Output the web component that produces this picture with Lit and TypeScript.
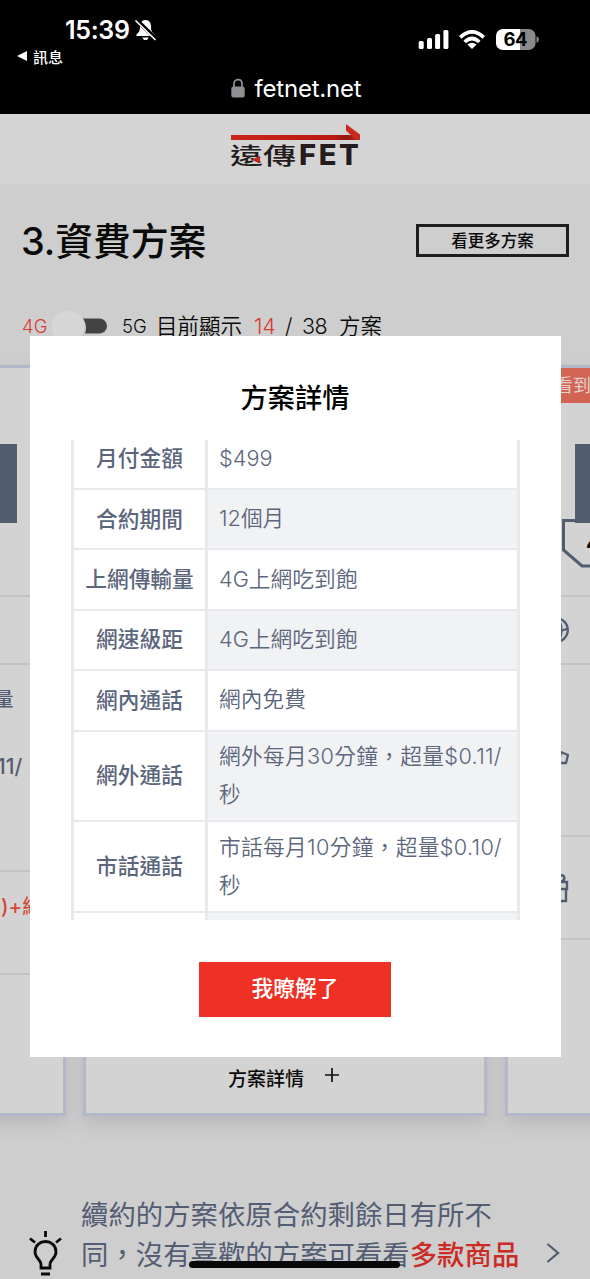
import { LitElement, html, css } from "lit";
import { customElement, property } from "lit/decorators.js";

const textFont = css`Inter, "Noto Sans CJK TC", sans-serif`;

@customElement("status-bar")
class StatusBar extends LitElement {
  static styles = css`
    :host { display: block; height: 114px; background: #000; color: #fff; font-family: ${textFont}; box-sizing: border-box; padding-top: 15px; }
    .top { display: flex; justify-content: space-between; height: 54px; }
    .clock { display: flex; align-items: center; height: 30px; padding-left: 65px; font-size: 25px; font-weight: 600; letter-spacing: -0.3px; gap: 5px; }
    .back { display: flex; align-items: center; height: 22px; padding-left: 17px; gap: 6px; font-size: 15px; font-weight: 500; }
    .signals { display: flex; padding: 13px 51px 0 0; gap: 10px; height: 24px; }
    .address { display: flex; justify-content: center; align-items: center; gap: 10px; height: 38px; padding-left: 2px; font-size: 24px; letter-spacing: -0.22px; }
    svg { display: block; flex: none; }
  `;
  render() {
    return html`
      <div class="top">
        <div>
          <div class="clock"><span>15:39</span>
            <svg width="21" height="22" viewBox="0 0 21 22">
              <path d="M10.500 1C6.500 1 5 4 5 8c0 4-1.300 5.500-3.500 7.300V17h18v-1.700C17.300 13.500 16 12 16 8c0-4-1.500-7-5.500-7z" fill="#fff"/>
              <path d="M7.500 18.500h6c-.6 2-1.600 2.600-3 2.600s-2.400-.6-3-2.600z" fill="#fff"/>
              <path d="M2 1.500L21 19.800" stroke="#000" stroke-width="4"/>
              <path d="M1 2L20 20.500" stroke="#fff" stroke-width="1.700" stroke-linecap="round"/>
            </svg>
          </div>
          <div class="back"><svg width="10" height="10" viewBox="0 0 10 10"><path d="M10 0v10L0 5z" fill="#fff"/></svg><span>訊息</span></div>
        </div>
        <div class="signals">
          <svg width="31" height="24" viewBox="-.7 0 31 24">
            <g fill="#fff"><rect x="0" y="13" width="5" height="8" rx="1.500"/><rect x="8.300" y="10" width="5" height="11" rx="1.500"/><rect x="16.400" y="6" width="5" height="15" rx="1.500"/><rect x="24.700" y="2" width="5" height="19" rx="1.500"/></g>
          </svg>
          <svg width="26" height="24" viewBox="0 0 26 24">
            <g fill="none" stroke="#fff" stroke-width="3.700"><path d="M1.300 9.300Q13-1.500 24.700 9.300"/><path d="M5.700 14Q13 7 20.300 14"/></g>
            <path d="M13 21l-4.600-4.500q4.600-3.700 9.200 0z" fill="#fff"/>
          </svg>
          <svg width="44" height="24" viewBox="0 0 44 24">
            <defs><clipPath id="b"><rect x="1" y="1" width="39.500" height="21" rx="6.800"/></clipPath></defs>
            <g clip-path="url(#b)"><rect width="25.500" height="24" fill="#fff"/><rect x="25.500" width="18" height="24" fill="#8b8b8b"/></g>
            <path d="M41.500 8.300q3 .8 2.300 3.500q0 2.200-2.300 3.200z" fill="#8b8b8b"/>
            <text x="20.300" y="18.300" text-anchor="middle" font-family="Inter" font-size="18.500" font-weight="700" letter-spacing="-.4" fill="#000">64</text>
          </svg>
        </div>
      </div>
      <div class="address">
        <svg width="14" height="20" viewBox="0 0 14 20"><rect x=".3" y="8.500" width="13.400" height="11" rx="2" fill="#8e8e93"/><path d="M3 9V5.600C3 .2 11 .2 11 5.600V9" fill="none" stroke="#8e8e93" stroke-width="1.800"/></svg>
        <span>fetnet.net</span>
      </div>`;
  }
}

@customElement("site-header")
class SiteHeader extends LitElement {
  static styles = css`
    :host { display: flex; justify-content: center; height: 70px; background: #d4d4d4; box-sizing: border-box; padding-top: 10px; }
    svg { display: block; overflow: visible; }
  `;
  render() {
    return html`<svg width="130" height="46" viewBox="0 0 130 46">
      <defs><linearGradient id="g" x1="0" x2="1"><stop offset="0" stop-color="#c9271c"/><stop offset=".8" stop-color="#b8170f"/><stop offset=".9" stop-color="#8f1b10"/><stop offset="1" stop-color="#cb2a20"/></linearGradient></defs>
      <rect x="1" y="11" width="129" height="5" fill="url(#g)"/>
      <path d="M116 0l14 10.500V16h-4L116 6.500z" fill="#cb2a20"/>
      <text x="0" y="39.500" font-family="Noto Sans CJK TC" font-weight="500" font-size="22.500" textLength="66" lengthAdjust="spacingAndGlyphs" fill="#241c1c">遠傳</text>
      <path d="M22 35.500l8-3.500v7z" fill="#c9271c"/>
      <text x="69" y="41" font-family="Inter" font-weight="800" font-size="28" letter-spacing="2.500" textLength="62.500" lengthAdjust="spacingAndGlyphs" fill="#241c1c">FET</text>
    </svg>`;
  }
}

@customElement("plan-toolbar")
class PlanToolbar extends LitElement {
  static styles = css`
    :host { display: block; height: 181px; font-family: ${textFont}; color: #0a0a0a; box-sizing: border-box; padding: 40px 21px 0 21px; }
    .head { display: flex; justify-content: space-between; align-items: center; height: 33px; }
    h1 { margin: 0; font-size: 37.900px; line-height: 33px; padding-top: 2px; font-weight: 500; white-space: nowrap; letter-spacing: -.1px; }
    .more { width: 153px; height: 33px; box-sizing: border-box; border: 3px solid #1d1d1d; display: grid; place-items: center; font-size: 16.500px; font-weight: 500; line-height: 24px; }
    .filter { display: flex; align-items: center; height: 40px; margin-top: 49px; white-space: nowrap; font-size: 21.500px; padding-left: 1px; font-weight: 350; }
    .filter span { flex: none; line-height: 40px; }
    .net { font-size: 18.500px; width: 30px; }
    .on, .count { color: #d63c34; }
    .switch { flex: none; width: 55px; height: 40px; margin-right: 15px; }
    .net.five { width: 34px; }
    .label { width: 98px; }
    .count { width: 31px; letter-spacing: -.1px; }
    .slash { width: 17px; }
    .total { width: 37px; letter-spacing: -.6px; }
  `;
  render() {
    return html`
      <div class="head"><h1>3.資費方案</h1><div class="more">看更多方案</div></div>
      <div class="filter">
        <span class="net on">4G</span>
        <svg class="switch" viewBox="0 0 55 40">
          <rect x="10" y="12.500" width="45" height="15" rx="7.500" fill="#434343"/>
          <circle cx="17" cy="22" r="17" fill="#c8c8c8"/><circle cx="16" cy="21" r="16.500" fill="#d6d6d6"/>
        </svg>
        <span class="net five">5G</span><span class="label">目前顯示</span><span class="count">14</span><span class="slash">/</span><span class="total">38</span><span>方案</span>
      </div>`;
  }
}

@customElement("plan-card")
class PlanCard extends LitElement {
  @property({ reflect: true }) side = "center";
  static styles = css`
    :host { display: block; flex: none; width: 404px; height: 751px; box-sizing: border-box; border: 3px solid #b2b8ca; background: #d3d3d3; box-shadow: 0 8px 16px rgba(130,130,145,.28); font-family: ${textFont}; color: #535d70; overflow: hidden; }
    :host([side="left"]) { width: 406px; margin-right: -1px; }
    .tag { height: 36px; width: 180px; margin-top: -1px; background: #d26454; color: #e3cfcb; font-size: 18px; line-height: 37px; box-sizing: border-box; padding-left: 47px; }
    .tag.blank { background: none; }
    .price { height: 79px; margin: 41px 46px 0 67px; background: #535d70; position: relative; z-index: 1; }
    .badge { display: flow-root; height: 72px; border-bottom: 2px solid #c3c3c5; }
    .badge svg { display: block; margin: -4px 0 0 54px; }
    .row { display: flex; align-items: center; border-bottom: 2px solid #c3c3c5; box-sizing: border-box; font-size: 19.500px; font-weight: 500; white-space: nowrap; }
    .row svg { margin-left: 35px; }
    .r1 { height: 68px; }
    .r2 { height: 207px; flex-direction: column; align-items: flex-start; }
    .vol { margin-left: 331px; line-height: 68px; }
    .rate { margin-left: 334px; line-height: 68px; font-size: 21px; }
    .r2.short { height: 172px; }
    .r2.short svg { margin-top: 76px; }
    .r3 { height: 103px; }
    .red { color: #d14a34; margin: -36px 0 0 338px; font-size: 20.500px; }
    .details { display: flex; justify-content: center; align-items: center; gap: 21px; height: 76px; margin-top: 671px; padding-right: 3px; box-sizing: border-box; color: #0a0a0a; font-size: 19px; font-weight: 500; }
    .details svg { margin-top: -4px; }
  `;
  render() {
    if (this.side === "center")
      return html`<div class="details"><span>方案詳情</span><svg width="14" height="14" viewBox="0 0 14 14"><path d="M7 0v14M0 7h14" stroke="#111" stroke-width="1.700"/></svg></div>`;
    const left = this.side === "left";
    return html`
      <div class="tag ${left ? "blank" : ""}">${left ? "" : "看到"}</div>
      <div class="price"></div>
      <div class="badge">${left ? "" : html`<svg width="140" height="49" viewBox="0 0 140 49"><path d="M1.500 1.500H138V47H20L1.500 31z" fill="none" stroke="#535d70" stroke-width="3"/><text x="24" y="32" font-family="Inter" font-weight="700" font-size="22" fill="#0a0a0a">4</text></svg>`}</div>
      ${left
        ? html`<div class="row r1"></div>
            <div class="row r2"><div class="vol">量</div><div class="rate">11/</div></div>
            <div class="row r3"><span class="red">)+網</span></div>`
        : html`<div class="row r1"><svg width="26" height="28" viewBox="0 0 26 28"><g fill="none" stroke="#535d70" stroke-width="2.300"><circle cx="13" cy="14" r="11.800"/><ellipse cx="13" cy="14" rx="5.500" ry="11.800"/><path d="M2 16q11 1 22-3"/></g></svg></div>
            <div class="row r2 short"><svg width="26" height="28" viewBox="0 0 26 28"><path d="M4 3l5-1 3 6-2 3 7 5 1-5 7 3-2 8h-5Q5 18 4 3z" fill="none" stroke="#535d70" stroke-width="2.300"/></svg></div>
            <div class="row r3"><svg width="26" height="30" viewBox="0 0 26 30"><g fill="none" stroke="#535d70" stroke-width="2.400"><path d="M2 9h22v7H2zM4 16v12h19V16M13 9v19M13 9C5 8 6 1 10 3l3 6 4-6c5-3 7 5-1 6"/></g></svg></div>`}
    `;
  }
}

const rows: [string, string][] = [
  ["月付金額", "$499"],
  ["合約期間", "12個月"],
  ["上網傳輸量", "4G上網吃到飽"],
  ["網速級距", "4G上網吃到飽"],
  ["網內通話", "網內免費"],
  ["網外通話", "網外每月30分鐘，超量$0.11/秒"],
  ["市話通話", "市話每月10分鐘，超量$0.10/秒"],
  ["", ""],
];

@customElement("plan-dialog")
class PlanDialog extends LitElement {
  static styles = css`
    :host { display: flex; flex-direction: column; align-items: center; width: 531px; height: 721px; background: #fff; font-family: ${textFont}; box-sizing: border-box; padding-top: 43px; }
    h2 { margin: 0; height: 40px; line-height: 40px; font-size: 27.200px; font-weight: 500; color: #000; }
    .view { width: 449px; height: 480px; margin: 21px 0 42px 1px; overflow: hidden; }
    .table { margin-top: -10.400px; border: solid #e7e9ec; border-width: 0 3px; }
    .row { display: grid; grid-template-columns: 131px 1fr; box-sizing: border-box; min-height: 60.400px; border-bottom: 2px solid #e7e9ec; color: #5b667c; font-size: 21.700px; line-height: 38px; }
    .key { display: grid; place-items: center; white-space: nowrap; font-weight: 500; padding-bottom: 1px; }
    .value { border-left: 3px solid #e7e9ec; padding: 5.200px 0 7.200px 11px; display: flex; align-items: center; font-weight: 350; letter-spacing: .03px; }
    .value span { width: 290px; }
    .row:nth-child(even) .value { background: #f1f2f4; }
    .two { min-height: 90.800px; }
    .two .value { letter-spacing: .33px; }
    .ok { width: 192px; height: 55px; border: 0; padding: 0 0 2px; background: #ef3125; color: #fff; font: 500 21.700px/53px ${textFont}; }
  `;
  render() {
    return html`<h2>方案詳情</h2>
      <div class="view"><div class="table">
        ${rows.map(([k, v]) => html`<div class="row ${v.length > 12 ? "two" : ""}"><div class="key">${k}</div><div class="value"><span>${v}</span></div></div>`)}
      </div></div>
      <button class="ok">我暸解了</button>`;
  }
}

@customElement("tip-banner")
class TipBanner extends LitElement {
  static styles = css`
    :host { display: flex; height: 84px; margin-top: 79px; font-family: ${textFont}; }
    .bulb { display: block; flex: none; margin: 36px 0 0 28px; }
    p { margin: 0 0 0 18px; width: 442px; flex: none; font-size: 27.400px; line-height: 40px; color: #535d73; white-space: nowrap; }
    b { font-weight: 500; color: #ca2b24; }
    .next { display: block; margin: 48px 0 0 23px; }
  `;
  render() {
    return html`
      <svg class="bulb" width="35" height="46" viewBox="0 0 35 46">
        <g fill="none" stroke="#0a0a0a" stroke-width="2.800"><path d="M17.500 0v6M2 7.500l5 4M33 7.500l-5 4M13 37v-4c0-4-6-6-6-12 0-14 21-14 21 0 0 6-6 8-6 12v4zM13 43h9"/></g>
      </svg>
      <p>續約的方案依原合約剩餘日有所不<br>同，沒有喜歡的方案可看看<b>多款商品</b></p>
      <svg class="next" width="14" height="20" viewBox="0 0 14 20"><path d="M1.500 1l10.500 9L1.500 19" fill="none" stroke="#535d73" stroke-width="2.300"/></svg>`;
  }
}

@customElement("app-root")
class AppRoot extends LitElement {
  static styles = css`
    :host { display: block; position: relative; width: 590px; height: 1279px; overflow: hidden; background: #cecece; }
    .cards { display: flex; gap: 18px; margin-left: -340px; }
    .dialog { position: absolute; left: 29.500px; top: 336px; }
    .home { position: absolute; left: 189px; top: 1261px; width: 211px; height: 7px; border-radius: 4px; background: #080808; }
  `;
  render() {
    return html`
      <status-bar></status-bar>
      <site-header></site-header>
      <plan-toolbar></plan-toolbar>
      <div class="cards"><plan-card side="left"></plan-card><plan-card></plan-card><plan-card side="right"></plan-card></div>
      <tip-banner></tip-banner>
      <plan-dialog class="dialog"></plan-dialog>
      <div class="home"></div>`;
  }
}
